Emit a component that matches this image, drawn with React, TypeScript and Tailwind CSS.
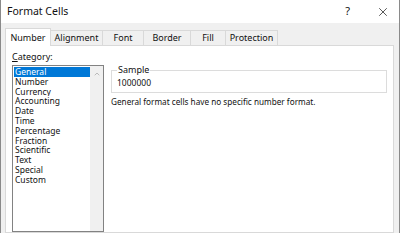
import { ChevronUp, X } from "lucide-react";

const categories = [
  "General",
  "Number",
  "Currency",
  "Accounting",
  "Date",
  "Time",
  "Percentage",
  "Fraction",
  "Scientific",
  "Text",
  "Special",
  "Custom",
];

const tabs = [
  { label: "Number", width: "w-[46px]" },
  { label: "Alignment", width: "w-[52px]" },
  { label: "Font", width: "w-[41px]" },
  { label: "Border", width: "w-[47px]" },
  { label: "Fill", width: "w-[35px]" },
  { label: "Protection", width: "w-[52px]" },
];

export default function App() {
  return (
    <div className="flex h-[233px] w-[400px] flex-col overflow-hidden border-x border-[#8a8a8a] bg-[#f0f0f0] font-['Noto_Sans',sans-serif] text-[8.5px] text-[#111]">
      <div className="flex h-[23px] shrink-0 items-center bg-white pl-[6px]">
        <span className="text-[10.5px]">Format Cells</span>
        <span className="ml-auto mr-[26px] text-[11px]">?</span>
        <X className="mr-[9px] h-[14px] w-[14px]" strokeWidth={1.2} />
      </div>

      <div className="mt-[5px] flex h-[17px] shrink-0 items-end pl-[4px] text-[9px]">
        {tabs.map((tab, i) =>
          i === 0 ? (
            <div
              key={tab.label}
              className={`relative z-10 -mb-px flex h-[18px] ${tab.width} items-center justify-center border border-b-0 border-[#d9d9d9] bg-white`}
            >
              {tab.label}
            </div>
          ) : (
            <div
              key={tab.label}
              className={`flex h-[15px] ${tab.width} items-center justify-center border border-l-0 border-b-0 border-[#d9d9d9] bg-[#f0f0f0]`}
            >
              {tab.label}
            </div>
          ),
        )}
      </div>

      <div className="ml-[4px] mr-[5px] flex flex-1 flex-col border border-[#d9d9d9] bg-white pl-[6px] pt-[5px]">
        <div className="h-[14px] text-[9px] leading-[12px]">
          <span className="underline">C</span>ategory:
        </div>
        <div className="flex flex-1 gap-[7px]">
          <div className="flex w-[92px] border border-[#828282]">
            <div className="flex flex-1 flex-col pl-[1px] pt-px">
              {categories.map((c, i) => (
                <div
                  key={c}
                  className={`h-[9.8px] overflow-hidden pl-[1px] text-[8.5px] leading-[9.8px] ${i === 0 ? "bg-[#0078d7] text-white" : ""}`}
                >
                  {c}
                </div>
              ))}
            </div>
            <div className="flex w-[13px] justify-center bg-[#f0f0f0] pt-[4px]">
              <ChevronUp className="h-[8px] w-[8px] text-[#a0a0a0]" strokeWidth={2} />
            </div>
          </div>

          <div className="flex w-[276px] flex-col">
            <fieldset className="h-[28px] border border-[#dcdcdc] px-[5px]">
              <legend className="px-px text-[9px] leading-[10px]">Sample</legend>
              <div className="pt-[3px] leading-[10px]">1000000</div>
            </fieldset>
            <p className="mt-[4px] text-[8.2px] leading-[10px]">General format cells have no specific number format.</p>
          </div>
        </div>
      </div>
    </div>
  );
}
